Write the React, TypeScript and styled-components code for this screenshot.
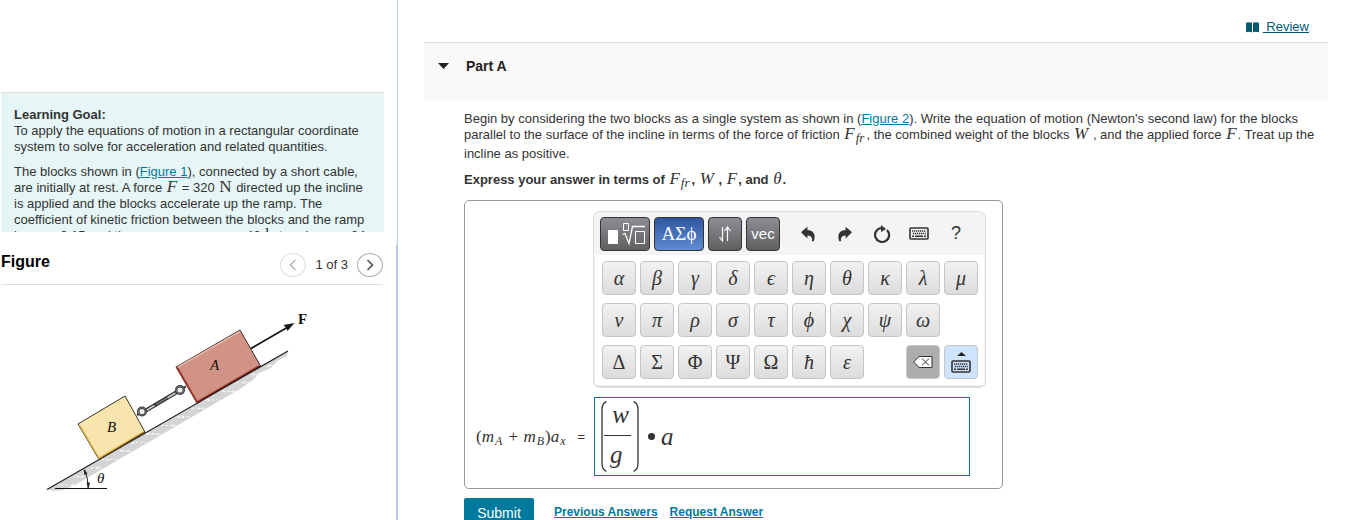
import React from 'react';
import styled, { createGlobalStyle, css } from 'styled-components';

const sans = '"Liberation Sans", Arial, sans-serif';
const serif = '"Liberation Serif", "Times New Roman", serif';

const GlobalStyle = createGlobalStyle`
  * { box-sizing: border-box; }
  body {
    margin: 0;
    background: #fff;
    color: #333;
    font: 13px/16px ${sans};
  }
  button { font-family: inherit; }
`;

const Page = styled.div`
  display: flex;
  height: 100vh;
  overflow: hidden;
`;

const Sidebar = styled.aside`
  flex: 0 0 398px;
  display: flex;
  flex-direction: column;
  border-right: 1px solid #b8cce0;
`;

const Intro = styled.section`
  flex: none;
  height: 140px;
  margin: 92px 13px 0 1px;
  padding: 14px 0 0 13px;
  overflow: hidden;
  background: #e6f6f6;
  border-top: 1px solid #ddd;
  p { margin: 0 0 9px; white-space: nowrap; }
`;

const TextLink = styled.a<{ $bold?: boolean }>`
  color: #007a9c;
  text-decoration: underline;
  font-weight: ${(p) => (p.$bold ? 'bold' : 'inherit')};
`;

const Var = styled.i`
  padding: 0 1px;
  font: italic 17px ${serif};
  line-height: 0;
  sub { padding: 0 1px; font-size: 13px; line-height: 16px; vertical-align: -3px; }
`;

const Unit = styled.span`
  padding: 0 1px;
  font: 17px ${serif};
  line-height: 0;
`;

const FigurePane = styled.section`
  flex: 1;
  margin-top: 13px;
  border-right: 1px solid #b8cce0;
`;

const FigureHeader = styled.header`
  display: flex;
  align-items: center;
  height: 40px;
  margin: 0 13px 0 1px;
  border-bottom: 1px solid #ddd;
  h2 {
    flex: 1;
    margin: 0;
    padding-bottom: 6px;
    color: #000;
    font-size: 16px;
    line-height: 18px;
  }
`;

const Pager = styled.nav`
  display: flex;
  align-items: center;
  gap: 9px;
`;

const RoundButton = styled.button`
  display: grid;
  place-items: center;
  width: 26px;
  height: 24px;
  padding: 0;
  border: 1px solid #aaa;
  border-radius: 50%;
  background: #fff;
  color: #555;
  &:disabled { border-color: #ddd; color: #bbb; }
`;

const Drawing = styled.svg`
  display: block;
  width: 396px;
  height: 235px;
`;

const Main = styled.main`
  flex: 1;
  min-width: 0;
  padding: 0 21px 0 26px;
`;

const TopBar = styled.div`
  display: flex;
  justify-content: flex-end;
  align-items: center;
  height: 42px;
  padding: 12px 19px 0 0;
`;

const ReviewLink = styled.a`
  display: flex;
  align-items: center;
  gap: 4px;
  color: #005a70;
  text-decoration: none;
  span { text-decoration: underline; white-space: pre; }
`;

const PartHeader = styled.header`
  display: flex;
  align-items: flex-start;
  gap: 17px;
  height: 58px;
  padding: 15px 14px 0;
  border-top: 1px solid #ddd;
  background: #f9f9f9;
  svg { margin-top: 5px; }
  h2 { margin: 0; color: #222; font-size: 14px; line-height: 16px; }
`;

const Content = styled.div`
  padding: 11px 0 0 40px;
`;

const Question = styled.p`
  margin: 0;
`;

const Instruction = styled.p`
  margin: 10px 0 0;
  font-weight: bold;
`;

const AnswerBox = styled.form`
  width: 539px;
  height: 289px;
  margin: 9px 0 9px;
  padding: 10px 0 0 11px;
  border: 1px solid #999;
  border-radius: 5px;
`;

const Editor = styled.div`
  width: 393px;
  height: 177px;
  margin: 0 0 9px 117px;
  padding: 0 1px;
  border: 1px solid #ddd;
  border-bottom-width: 2px;
  border-radius: 7px;
  background: #f4f4f4;
`;

const Toolbar = styled.div`
  display: flex;
  align-items: center;
  gap: 4px;
  height: 43px;
  padding: 0 5px;
`;

const ModeButton = styled.button<{ $wide?: boolean; $active?: boolean }>`
  display: grid;
  place-items: center;
  width: ${(p) => (p.$wide ? 50 : 34)}px;
  height: 34px;
  padding: 0;
  border: 1px solid #333;
  border-radius: 4px;
  background: ${(p) => (p.$active ? 'linear-gradient(#2f57a0, #5f8bd0)' : 'linear-gradient(#8d8c94, #606060)')};
  color: #fff;
  font-size: 15px;
  line-height: 18px;
`;

const Greek = styled.span`
  font: 19px/20px ${serif};
`;

const Tools = styled.div`
  display: flex;
  gap: 9px;
  padding-left: 10px;
`;

const ToolButton = styled.button`
  display: grid;
  place-items: center;
  width: 28px;
  height: 30px;
  padding: 0;
  border: 0;
  background: none;
  color: #333;
  font-size: 18px;
`;

const Keys = styled.div`
  display: grid;
  grid-template-columns: repeat(10, 34px);
  gap: 8px 4px;
  height: 130px;
  padding: 6px 0 6px 7px;
  background: #fff;
`;

const Key = styled.button<{ $upright?: boolean; $tone?: 'dark' | 'blue' }>`
  display: grid;
  place-items: center;
  align-content: center;
  gap: 4px;
  height: 34px;
  padding: 0;
  border: 1px solid #c6c6c6;
  border-radius: 4px;
  background: linear-gradient(#f2f2f2, #dcdcdc);
  color: #333;
  font: ${(p) => (p.$upright ? 'normal' : 'italic')} 20px/24px ${serif};
  ${(p) => p.$tone === 'dark' && css`grid-column: 9; background: #adadad;`}
  ${(p) => p.$tone === 'blue' && css`background: #cfe5ff;`}
`;

const EquationRow = styled.div`
  display: flex;
  align-items: center;
`;

const EquationLabel = styled.span`
  display: flex;
  align-items: center;
  justify-content: space-between;
  width: 109px;
  margin-right: 9px;
`;

const Formula = styled.span`
  font: 17px/18px ${serif};
  sub { padding: 0 1px; font-size: 12px; line-height: 0; vertical-align: -3px; }
`;

const Operator = styled.span`
  padding: 0 1px;
`;

const MathField = styled.div`
  display: flex;
  align-items: center;
  width: 376px;
  height: 79px;
  padding-left: 6px;
  border: 1px solid #007a9c;
  font: italic 25px/28px ${serif};
`;

const Fraction = styled.span`
  display: flex;
  flex-direction: column;
  width: 27px;
  margin: 0 2px 0 -3px;
`;

const Numerator = styled.span`
  height: 35px;
  padding-left: 6px;
  border-bottom: 1px solid #333;
  text-align: center;
`;

const Denominator = styled.span`
  height: 37px;
  padding: 5px 0 0 6px;
`;

const Dot = styled.span`
  width: 7px;
  height: 7px;
  margin: 0 6px 0 9px;
  border-radius: 50%;
  background: #333;
`;

const Actions = styled.div`
  display: flex;
  gap: 12px;
  font-size: 12px;
  line-height: 28px;
`;

const Submit = styled.button`
  width: 70px;
  height: 30px;
  margin-right: 8px;
  border: 0;
  border-radius: 2px;
  background: #007a9c;
  color: #fff;
  font-size: 14px;
`;

const Keyboard = () => (
  <svg width="20" height="13" viewBox="0 0 20 13" fill="none" stroke="#333">
    <rect x="1" y="1" width="18" height="11" rx="1" strokeWidth="1.6" />
    <path d="M3 4h14M3.8 6.5h13" strokeDasharray="1.3 .7" strokeWidth="1.4" />
    <path d="M3 9.200h2M6 9.200h8M15 9.200h2" strokeWidth="1.4" />
  </svg>
);

const Chevron = ({ d }: { d: string }) => (
  <svg width="8" height="12" viewBox="0 0 8 12" fill="none" stroke="currentColor" strokeWidth="1.7">
    <path d={d} />
  </svg>
);

const CurvedArrow = ({ flip }: { flip?: boolean }) => (
  <svg width="16" height="16" viewBox="0 0 16 16">
    <path
      fill="#333"
      transform={flip ? 'translate(16 0) scale(-1 1)' : undefined}
      d="M1 6.200 7.400.8v3.300c5.200.2 9 4 6.400 11.100h-2c.9-3.700-.7-5.700-4.400-5.700v3Z"
    />
  </svg>
);

const ParenSide = ({ d }: { d: string }) => (
  <svg width="6" height="71" viewBox="0 0 6 71" fill="none" stroke="#333" strokeWidth="1.3">
    <path d={d} />
  </svg>
);

/* Speckles of the concrete ramp, scattered along and across its length. */
const speckles = Array.from({ length: 110 }, (_, i) => {
  const along = 12 + ((i * 61.8) % 222);
  const depth = 2 + ((i * 37) % 17) * 0.5;
  return {
    cx: 47 + along,
    cy: 489.5 - along * 0.575 + depth,
    r: 0.4 + (i % 4) * 0.2,
  };
});

const InclineDrawing = () => (
  <Drawing viewBox="0 285 396 235" role="img" aria-label="Blocks A and B on an incline">
    <path d="M47 489.500 288 351l-1 5-10 5-6 7-12 5-6 7-13 9L75 485l-12 5-9 1Z" fill="#d3d4d6" />
    {speckles.map((s, i) => <circle key={i} {...s} fill="#fff" />)}
    <path d="M47 489.500 288 351" stroke="#222" strokeWidth="1.200" />
    <path d="M55 488.500h52" stroke="#111" strokeWidth="1.200" />
    <path d="M84.500 470q4 8 3.500 18" fill="none" stroke="#222" />
    <path d="M83.500 468.500l1 6.500 3-1.500ZM88.500 488.500l-2-6h3.500Z" fill="#222" />

    <path d="m78 424 47-28 20 36-46 27.500Z" fill="#f8e4ad" stroke="#3a3528" />
    <path d="m79.500 425 19.500 33 45-26.500" fill="none" stroke="#e0b040" strokeWidth="1.400" />
    <path d="m99 459.500 46-27.500" stroke="#443410" />

    <path d="m176 367 64-37 20.500 36L197 403Z" fill="#d19385" stroke="#3a2a28" />
    <path d="m178 367 62-35.500" stroke="#e8b4a8" strokeWidth="1.500" />
    <path d="m177.500 368 19.500 34 62-36" fill="none" stroke="#a03a30" strokeWidth="1.800" />
    <path d="m197 403 63.500-37" stroke="#2a1010" />

    <path d="m137 415 4-2M181 389l5-2.500" stroke="#444" strokeWidth="2" />
    <path d="m145 411 32-19" stroke="#333" strokeWidth="4" strokeLinecap="round" />
    <path d="m147 410 7-4.200M168 397.500l7-4.200" stroke="#ccc" strokeWidth="1.600" strokeLinecap="round" />
    <path d="m156 404.500 11-6.500" stroke="#8c8480" strokeWidth="1.200" />
    <circle cx="142" cy="411.500" r="3.800" fill="#eee" stroke="#333" strokeWidth="2.400" />
    <circle cx="142" cy="411.500" r="3.800" fill="none" stroke="#999" strokeWidth=".6" />
    <circle cx="180" cy="390" r="3.800" fill="#eee" stroke="#333" strokeWidth="2.400" />
    <circle cx="180" cy="390" r="3.800" fill="none" stroke="#999" strokeWidth=".6" />

    <path d="m251 348.500 37-21.500" stroke="#1a1718" strokeWidth="1.900" />
    <path d="m294.500 323-7 8-1.500-3.500-2.500-2.500Z" fill="#1a1718" />
    <g fontFamily="Liberation Serif, serif" fontSize="15" fontStyle="italic" fill="#111">
      <text x="210" y="370">A</text>
      <text x="107" y="432">B</text>
      <text x="97" y="483">θ</text>
      <text x="298" y="324" fontStyle="normal" fontWeight="bold">F</text>
    </g>
  </Drawing>
);

const lowerCase = [...'αβγδϵηθκλμ', ...'νπρστϕχψω'];
const upperCase = [...'ΔΣΦΨΩ'];

export default function App() {
  return (
    <Page>
      <GlobalStyle />
      <Sidebar>
        <Intro>
          <p>
            <b>Learning Goal:</b><br />
            To apply the equations of motion in a rectangular coordinate<br />
            system to solve for acceleration and related quantities.
          </p>
          <p>
            The blocks shown in (<TextLink href="#figure">Figure 1</TextLink>), connected by a short cable,<br />
            are initially at rest. A force <Var>F</Var> = 320 <Unit>N</Unit> directed up the incline<br />
            is applied and the blocks accelerate up the ramp. The<br />
            coefficient of kinetic friction between the blocks and the ramp<br />
            is <Var>μ<sub>k</sub></Var> = 0.15 and the masses are <Var>m<sub>A</sub></Var> = 46 <Unit>kg</Unit> and <Var>m<sub>B</sub></Var> = 34
          </p>
        </Intro>
        <FigurePane id="figure">
          <FigureHeader>
            <h2>Figure</h2>
            <Pager aria-label="Figures">
              <RoundButton type="button" disabled aria-label="Previous figure"><Chevron d="M6.500 1 1.500 6l5 5" /></RoundButton>
              <span>1 of 3</span>
              <RoundButton type="button" aria-label="Next figure"><Chevron d="m1.500 1 5 5-5 5" /></RoundButton>
            </Pager>
          </FigureHeader>
          <InclineDrawing />
        </FigurePane>
      </Sidebar>
      <Main>
        <TopBar>
          <ReviewLink href="#review">
            <svg width="13" height="11" viewBox="0 0 13 11" fill="currentColor">
              <path d="M0 .7Q3.200-.2 6 .8V10.300Q3 9 0 10.300ZM7 .8Q9.800-.4 13 .7V10.300Q10 9 7 10.300Z" />
            </svg>
            <span> Review</span>
          </ReviewLink>
        </TopBar>
        <PartHeader>
          <svg width="11" height="6" viewBox="0 0 11 6"><path d="M0 0h11L5.500 6Z" fill="#222" /></svg>
          <h2>Part A</h2>
        </PartHeader>
        <Content>
          <Question>
            Begin by considering the two blocks as a single system as shown in (<TextLink href="#figure">Figure 2</TextLink>).
            Write the equation of motion (Newton's second law) for the blocks<br />parallel to the surface of the incline in
            terms of the force of friction <Var>F<sub>fr</sub></Var>, the combined weight of the blocks <Var>W</Var> , and
            the applied force <Var>F</Var>. Treat up the incline as positive.
          </Question>
          <Instruction>
            Express your answer in terms of <Var>F<sub>fr</sub></Var>, <Var>W</Var> , <Var>F</Var>, and <Var>θ</Var>.
          </Instruction>
          <AnswerBox onSubmit={(e) => e.preventDefault()}>
            <Editor>
              <Toolbar>
                <ModeButton type="button" $wide aria-label="Templates">
                  <svg width="42" height="24" viewBox="0 0 42 24" fill="none" stroke="#fff">
                    <path d="M4 8h10v14H4Z" fill="#fff" stroke="none" />
                    <path d="M19.500 1.500h5v7h-5ZM31.500 9.500h9v12h-9Z" />
                    <path d="m18.500 12.500 2.500-1 4 10 3.500-17H41" strokeWidth="1.300" />
                  </svg>
                </ModeButton>
                <ModeButton type="button" $wide $active><Greek>ΑΣϕ</Greek></ModeButton>
                <ModeButton type="button" aria-label="Arrows">
                  <svg width="14" height="16" viewBox="0 0 14 16" fill="none" stroke="#fff" strokeWidth="1.200">
                    <path d="M4.500 1v14l-3-4M9.500 15V1L6.500 5M9.500 1l3 4" />
                  </svg>
                </ModeButton>
                <ModeButton type="button">vec</ModeButton>
                <Tools>
                  <ToolButton type="button" aria-label="Undo"><CurvedArrow /></ToolButton>
                  <ToolButton type="button" aria-label="Redo"><CurvedArrow flip /></ToolButton>
                  <ToolButton type="button" aria-label="Reset">
                    <svg width="18" height="18" viewBox="0 0 18 18" fill="none" stroke="#333" strokeWidth="2.200">
                      <path d="M14 5A7 7 0 1 1 8.500 3" />
                      <path d="M8 0v7l5-3Z" fill="#333" stroke="none" />
                    </svg>
                  </ToolButton>
                  <ToolButton type="button" aria-label="Keyboard shortcuts"><Keyboard /></ToolButton>
                  <ToolButton type="button" aria-label="Help">?</ToolButton>
                </Tools>
              </Toolbar>
              <Keys>
                {lowerCase.map((c) => <Key type="button" key={c}>{c}</Key>)}
                <span />
                {upperCase.map((c) => <Key type="button" key={c} $upright>{c}</Key>)}
                <Key type="button">ħ</Key>
                <Key type="button">ε</Key>
                <Key type="button" $tone="dark" aria-label="Delete">
                  <svg width="20" height="12" viewBox="0 0 20 12" fill="#fff" stroke="#333">
                    <path d="M6 .5h13v11H6L.7 6Z" />
                    <path d="m9 2.500 7 7m0-7-7 7" />
                  </svg>
                </Key>
                <Key type="button" $tone="blue" aria-label="Show keyboard">
                  <svg width="9" height="4" viewBox="0 0 9 4"><path d="M4.500 0 9 4H0Z" fill="#222" /></svg>
                  <Keyboard />
                </Key>
              </Keys>
            </Editor>
            <EquationRow>
              <EquationLabel id="equation">
                <Formula>(<i>m<sub>A</sub></i><Operator> + </Operator><i>m<sub>B</sub></i>)<i>a<sub>x</sub></i></Formula>
                <span>=</span>
              </EquationLabel>
              <MathField role="textbox" tabIndex={0} aria-labelledby="equation">
                <ParenSide d="M5.500.700Q1 2 1 9v53q0 7 4.500 8.300" />
                <Fraction>
                  <Numerator>w</Numerator>
                  <Denominator>g</Denominator>
                </Fraction>
                <ParenSide d="M.5.700Q5 2 5 9v53q0 7-4.500 8.300" />
                <Dot />
                <span>a</span>
              </MathField>
            </EquationRow>
          </AnswerBox>
          <Actions>
            <Submit type="submit">Submit</Submit>
            <TextLink $bold href="#previous">Previous Answers</TextLink>
            <TextLink $bold href="#request">Request Answer</TextLink>
          </Actions>
        </Content>
      </Main>
    </Page>
  );
}
